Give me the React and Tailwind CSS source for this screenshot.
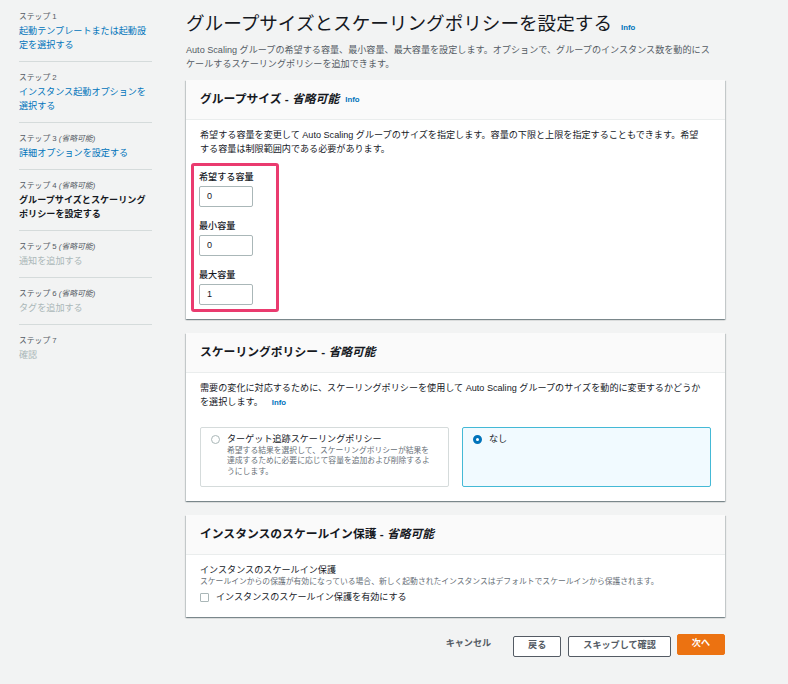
const steps = [
  { n: 1, optional: false, lines: ['起動テンプレートまたは起動設', '定を選択する'], state: 'link' },
  { n: 2, optional: false, lines: ['インスタンス起動オプションを', '選択する'], state: 'link' },
  { n: 3, optional: true, lines: ['詳細オプションを設定する'], state: 'link' },
  { n: 4, optional: true, lines: ['グループサイズとスケーリング', 'ポリシーを設定する'], state: 'current' },
  { n: 5, optional: true, lines: ['通知を追加する'], state: 'disabled' },
  { n: 6, optional: true, lines: ['タグを追加する'], state: 'disabled' },
  { n: 7, optional: false, lines: ['確認'], state: 'disabled' },
]

const stepColor = {
  link: 'text-[#0073bb]',
  current: 'text-[#16191f] font-bold',
  disabled: 'text-[#aab7b8]',
}

function Info({ className = '' }) {
  return <span className={`text-[7.8px] font-bold text-[#0073bb] ${className}`}>Info</span>
}

function Panel({ title, info, children, bodyClass }) {
  return (
    <div className="bg-white shadow-[0_1px_1px_0_rgba(0,28,36,0.3),1px_1px_1px_0_rgba(0,28,36,0.15),-1px_1px_1px_0_rgba(0,28,36,0.15)]">
      <div className="flex items-center border-b border-[#eaeded] bg-[#fafafa] px-[14px] py-[12px] text-[11.8px] font-bold leading-[15px] text-[#16191f]">
        <span>
          {title} - <i>省略可能</i>
        </span>
        {info && <Info className="ml-[6px]" />}
      </div>
      <div className={bodyClass}>{children}</div>
    </div>
  )
}

function NumberField({ label, value, first }) {
  return (
    <div className={first ? '' : 'mt-[12px]'}>
      <div className="text-[9.1px] font-medium leading-[14px] text-[#16191f]">{label}</div>
      <div className="mt-[2px] flex h-[21px] w-[54px] items-center rounded-[2px] border border-[#aab7b8] bg-white px-[7px] text-[9.1px] text-[#16191f]">
        {value}
      </div>
    </div>
  )
}

function Button({ children, primary }) {
  return (
    <button
      className={
        primary
          ? 'h-[21px] rounded-[2px] border border-[#ec7211] bg-[#ec7211] px-[14px] text-[9.1px] font-bold text-white'
          : 'h-[21px] rounded-[2px] border border-[#545b64] bg-white px-[14px] text-[9.1px] font-bold text-[#545b64]'
      }
    >
      {children}
    </button>
  )
}

export default function App() {
  return (
    <div className="flex h-[684px] w-[788px] bg-[#f2f3f3] text-[#16191f] [font-family:'Liberation_Sans','Noto_Sans_CJK_JP',sans-serif]">
      {/* wizard steps */}
      <nav className="w-[186px] shrink-0 pl-[19px] pr-[34px] pt-[1px]">
        <ul>
          {steps.map((s, i) => (
            <li key={s.n} className={`py-[9px] ${i < steps.length - 1 ? 'border-b border-[#d5dbdb]' : ''}`}>
              <div className="text-[7.8px] leading-[14px] text-[#545b64]">
                ステップ {s.n}
                {s.optional && <i> (省略可能)</i>}
              </div>
              <div className={`text-[9.1px] leading-[14px] ${stepColor[s.state]}`}>
                {s.lines.map((l, j) => (
                  <div key={j}>{l}</div>
                ))}
              </div>
            </li>
          ))}
        </ul>
      </nav>

      <main className="w-[539px] shrink-0 pt-[12px]">
        <div className="flex items-baseline">
          <h1 className="text-[18.6px] font-normal leading-[23px] text-[#16191f]">
            グループサイズとスケーリングポリシーを設定する
          </h1>
          <Info className="ml-[9px]" />
        </div>
        <p className="mt-[8px] whitespace-nowrap text-[9.1px] leading-[14px] text-[#545b64]">
          Auto Scaling グループの希望する容量、最小容量、最大容量を設定します。オプションで、グループのインスタンス数を動的にス
          <br />
          ケールするスケーリングポリシーを追加できます。
        </p>

        <div className="mt-[9px]">
          <Panel title="グループサイズ" info bodyClass="px-[14px] pt-[8px] pb-[7px]">
            <p className="whitespace-nowrap text-[9.1px] leading-[14px] text-[#16191f]">
              希望する容量を変更して Auto Scaling グループのサイズを指定します。容量の下限と上限を指定することもできます。希望
              <br />
              する容量は制限範囲内である必要があります。
            </p>
            <div className="-ml-[9px] mt-[7px] w-[88px] rounded-[3px] border-[3px] border-[#ea3b6f] pb-[4px] pl-[5px] pt-[4px]">
              <NumberField label="希望する容量" value="0" first />
              <NumberField label="最小容量" value="0" />
              <NumberField label="最大容量" value="1" />
            </div>
          </Panel>
        </div>

        <div className="mt-[14px]">
          <Panel title="スケーリングポリシー" bodyClass="px-[14px] pt-[8px] pb-[14px]">
            <p className="whitespace-nowrap text-[9.1px] leading-[14px] text-[#16191f]">
              需要の変化に対応するために、スケーリングポリシーを使用して Auto Scaling グループのサイズを動的に変更するかどうか
              <br />
              を選択します。
              <Info className="ml-[9px]" />
            </p>
            <div className="mt-[17px] grid grid-cols-2 gap-[13px]">
              <div className="flex h-[60px] items-start rounded-[2px] border border-[#d5dbdb] bg-white px-[10px] pt-[4px]">
                <span className="mt-[2.5px] h-[9px] w-[9px] shrink-0 rounded-full border border-[#aab7b8] bg-white" />
                <div className="ml-[7px]">
                  <div className="text-[9.1px] leading-[14px] text-[#16191f]">ターゲット追跡スケーリングポリシー</div>
                  <div className="text-[7.8px] leading-[10.4px] text-[#687078]">
                    希望する結果を選択して、スケーリングポリシーが結果を
                    <br />
                    達成するために必要に応じて容量を追加および削除するよ
                    <br />
                    うにします。
                  </div>
                </div>
              </div>
              <div className="flex h-[60px] items-start rounded-[2px] border border-[#44b9d6] bg-[#f1faff] px-[10px] pt-[4px]">
                <span className="mt-[2.5px] h-[9px] w-[9px] shrink-0 rounded-full border-[3px] border-[#0073bb] bg-white" />
                <div className="ml-[7px] text-[9.1px] leading-[14px] text-[#16191f]">なし</div>
              </div>
            </div>
          </Panel>
        </div>

        <div className="mt-[14px]">
          <Panel title="インスタンスのスケールイン保護" bodyClass="px-[14px] pt-[8px] pb-[13px]">
            <div className="text-[9.1px] leading-[14px] text-[#16191f]">インスタンスのスケールイン保護</div>
            <div className="text-[7.8px] leading-[10.4px] text-[#687078]">
              スケールインからの保護が有効になっている場合、新しく起動されたインスタンスはデフォルトでスケールインから保護されます。
            </div>
            <label className="mt-[3px] flex items-center text-[9.1px] leading-[14px] text-[#16191f]">
              <span className="h-[9px] w-[9px] rounded-[1px] border border-[#aab7b8] bg-white" />
              <span className="ml-[7px]">インスタンスのスケールイン保護を有効にする</span>
            </label>
          </Panel>
        </div>

        <div className="mt-[14px] flex items-center justify-end">
          <span className="mr-[22px] text-[9.1px] font-bold text-[#545b64]">キャンセル</span>
          <div className="mr-[7px]">
            <Button>戻る</Button>
          </div>
          <div className="mr-[6px]">
            <Button>スキップして確認</Button>
          </div>
          <Button primary>次へ</Button>
        </div>
      </main>
    </div>
  )
}
